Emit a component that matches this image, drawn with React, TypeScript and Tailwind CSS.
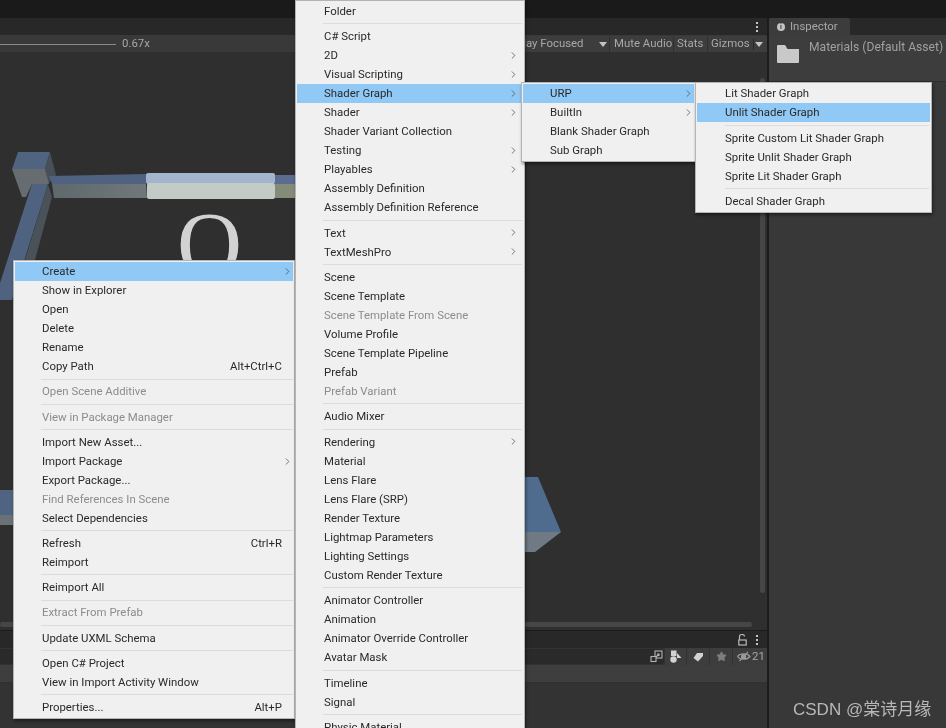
import { ChevronRight, Star } from "lucide-react";

type Row =
  | "-"
  | {
      label: string;
      arrow?: boolean;
      disabled?: boolean;
      active?: boolean;
      shortcut?: string;
    };

const t = (label: string): Row => ({ label });
const a = (label: string): Row => ({ label, arrow: true });
const d = (label: string): Row => ({ label, disabled: true });

const assetMenu: Row[] = [
  { label: "Create", arrow: true, active: true },
  t("Show in Explorer"),
  t("Open"),
  t("Delete"),
  t("Rename"),
  { label: "Copy Path", shortcut: "Alt+Ctrl+C" },
  "-",
  d("Open Scene Additive"),
  "-",
  d("View in Package Manager"),
  "-",
  t("Import New Asset..."),
  a("Import Package"),
  t("Export Package..."),
  d("Find References In Scene"),
  t("Select Dependencies"),
  "-",
  { label: "Refresh", shortcut: "Ctrl+R" },
  t("Reimport"),
  "-",
  t("Reimport All"),
  "-",
  d("Extract From Prefab"),
  "-",
  t("Update UXML Schema"),
  "-",
  t("Open C# Project"),
  t("View in Import Activity Window"),
  "-",
  { label: "Properties...", shortcut: "Alt+P" },
];

const createMenu: Row[] = [
  t("Folder"),
  "-",
  t("C# Script"),
  a("2D"),
  a("Visual Scripting"),
  { label: "Shader Graph", arrow: true, active: true },
  a("Shader"),
  t("Shader Variant Collection"),
  a("Testing"),
  a("Playables"),
  t("Assembly Definition"),
  t("Assembly Definition Reference"),
  "-",
  a("Text"),
  a("TextMeshPro"),
  "-",
  t("Scene"),
  t("Scene Template"),
  d("Scene Template From Scene"),
  t("Volume Profile"),
  t("Scene Template Pipeline"),
  t("Prefab"),
  d("Prefab Variant"),
  "-",
  t("Audio Mixer"),
  "-",
  a("Rendering"),
  t("Material"),
  t("Lens Flare"),
  t("Lens Flare (SRP)"),
  t("Render Texture"),
  t("Lightmap Parameters"),
  t("Lighting Settings"),
  t("Custom Render Texture"),
  "-",
  t("Animator Controller"),
  t("Animation"),
  t("Animator Override Controller"),
  t("Avatar Mask"),
  "-",
  t("Timeline"),
  t("Signal"),
  "-",
  t("Physic Material"),
];

const shaderGraphMenu: Row[] = [
  { label: "URP", arrow: true, active: true },
  a("BuiltIn"),
  t("Blank Shader Graph"),
  t("Sub Graph"),
];

const urpMenu: Row[] = [
  t("Lit Shader Graph"),
  { label: "Unlit Shader Graph", active: true },
  "-",
  t("Sprite Custom Lit Shader Graph"),
  t("Sprite Unlit Shader Graph"),
  t("Sprite Lit Shader Graph"),
  "-",
  t("Decal Shader Graph"),
];

function Menu({
  rows,
  className,
  sepHeight = "h-[6.4px]",
}: {
  rows: Row[];
  className: string;
  sepHeight?: string;
}) {
  return (
    <div
      className={`absolute border border-[#b4b4b4] bg-[#f0f0f0] p-px shadow-[1px_2px_3px_rgba(0,0,0,0.45)] ${className}`}
    >
      {rows.map((row, i) =>
        row === "-" ? (
          <div key={i} className={`flex items-center pl-[26px] pr-px ${sepHeight}`}>
            <div className="h-px w-full bg-[#dcdcdc]" />
          </div>
        ) : (
          <div
            key={i}
            className={`flex h-[19px] items-center justify-between pl-[27px] pr-[4px] ${
              row.active ? "bg-[#90c8f6]" : ""
            } ${row.disabled ? "text-[#8c8c8c]" : "text-[#2a2a2a]"}`}
          >
            <span className="pt-px">{row.label}</span>
            {row.shortcut && <span className="pr-[11px] pt-px">{row.shortcut}</span>}
            {row.arrow && (
              <ChevronRight size={11} strokeWidth={1.6} className="text-[#4a4a4a]" />
            )}
          </div>
        ),
      )}
    </div>
  );
}

function SceneDrawing() {
  return (
    <svg
      className="absolute left-0 top-[-52px]"
      width="767"
      height="630"
      viewBox="0 0 767 630"
    >
      <defs>
        <linearGradient id="barSide" x1="0" y1="0" x2="1" y2="0">
          <stop offset="0" stopColor="#5f686c" />
          <stop offset="1" stopColor="#70787b" />
        </linearGradient>
      </defs>
      <polygon points="12,169 18,152 50,152 45,169" fill="#50647f" />
      <polygon points="50,152 56,175 48,184 45,169" fill="#474f58" />
      <polygon points="12,169 45,169 49,184 32,184 26,197 22,197" fill="#666c70" />
      <polygon points="32,184 48,184 12,300 0,300 0,283" fill="#4f6280" />
      <polygon points="48,184 52,197 35,260 25,260" fill="#485258" />
      <polygon points="49,176 146,174 146,184 52,184" fill="#4f6280" />
      <polygon points="52,184 146,184 147,198 54,198" fill="url(#barSide)" />
      <rect x="146" y="173" width="129" height="11" rx="2" fill="#a3b5cc" />
      <rect x="147" y="183" width="128" height="16" rx="2" fill="#c3cbc6" />
      <rect x="275" y="175" width="20" height="9" fill="#5a6c8f" />
      <rect x="275" y="184" width="20" height="14" fill="#848c78" />
      <rect x="0" y="490" width="14" height="25" fill="#4f6480" />
      <rect x="0" y="515" width="14" height="10" fill="#6a7278" />
      <polygon points="524,477 538,477 561,532 524,532" fill="#4f6c8f" />
      <polygon points="524,532 561,532 535,552 524,552" fill="#6f7a85" />
    </svg>
  );
}

export default function App() {
  return (
    <div className="relative flex h-[728px] w-[946px] flex-col overflow-hidden bg-[#1a1a1a] font-['Roboto',sans-serif] text-[11.4px] leading-none blur-[0.4px]">
      <div className="h-[18px] shrink-0 bg-[#1a1a1a]" />

      <div className="flex min-h-0 flex-1">
        {/* scene and project panels */}
        <div className="flex w-[767px] shrink-0 flex-col">
          <div className="flex h-[17px] shrink-0 items-center justify-end bg-[#282828] pr-[9px]">
            <Dots />
          </div>
          <div className="flex h-[17px] shrink-0 items-center whitespace-nowrap bg-[#393939] pt-px text-[#a8a8a8]">
            <div className="h-px w-[116px] bg-[#8a8a8a]" />
            <span className="ml-[6px]">0.67x</span>
            <div className="ml-auto flex h-full items-center gap-px bg-[#303030]">
              <span className="flex h-full w-[100px] items-center bg-[#3d3d3d] pl-[7px]">
                Play Focused
                <Caret className="ml-auto mr-[2px]" />
              </span>
              <span className="flex h-full w-[63px] items-center bg-[#3d3d3d] pl-[4px]">Mute Audio</span>
              <span className="flex h-full w-[33px] items-center bg-[#3d3d3d] pl-[3px]">Stats</span>
              <span className="flex h-full w-[59px] items-center bg-[#3d3d3d] pl-[3px]">
                Gizmos
                <span className="ml-[3px] h-[11px] w-px bg-[#282828]" />
                <Caret className="ml-auto mr-[4px]" />
              </span>
            </div>
          </div>

          <div className="relative min-h-0 flex-1 overflow-hidden bg-[#2e2f2e]">
            <SceneDrawing />
            <span className="absolute left-[177px] top-[148px] font-['Liberation_Serif',serif] text-[90px] leading-none text-[#d2d2d2]">
              O
            </span>
            <div className="absolute bottom-[37px] right-[2px] top-[26px] w-[5px] rounded-full bg-[#464646]" />
            <div className="absolute bottom-[3px] left-0 h-[5px] w-[752px] rounded-full bg-[#464646]" />
          </div>

          <div className="flex h-[18px] shrink-0 items-center justify-end gap-[9px] border-t border-[#1c1c1c] bg-[#282828] pr-[9px]">
            <svg width="9" height="12" viewBox="0 0 9 12" fill="none" stroke="#b8b8b8" strokeWidth="1.2">
              <path d="M1.5 6V2.5a2.5 2 0 0 1 5 0" />
              <rect x="0.8" y="6" width="7.4" height="5" />
            </svg>
            <Dots />
          </div>
          <div className="flex h-[17px] shrink-0 items-center gap-px bg-[#323232] text-[#a8a8a8]">
            <div className="flex h-[15px] w-[664px] items-center justify-end rounded-r-[3px] bg-[#2a2a2a] pr-px">
              <svg width="13" height="13" viewBox="0 0 13 13" fill="none" stroke="#b4b4b4" strokeWidth="1.1">
                <rect x="5" y="1" width="7" height="7" />
                <rect x="1" y="6.5" width="5" height="5" fill="#2a2a2a" />
                <path d="M6 7l3-3M7 4h2v2" />
              </svg>
            </div>
            <IconCell width="w-[21px]">
              <svg width="13" height="13" viewBox="0 0 13 13" fill="#d2d2d2">
                <rect x="2" y="0.5" width="5.5" height="5.5" />
                <circle cx="4.5" cy="9.5" r="3.2" />
                <polygon points="8,3 12.5,8 8,8" />
              </svg>
            </IconCell>
            <IconCell width="w-[22px]">
              <svg width="11" height="10" viewBox="0 0 11 10" fill="#d2d2d2">
                <polygon points="4,1 10,1 10,4 5,9.5 0.5,6" />
              </svg>
            </IconCell>
            <IconCell width="w-[22px]">
              <Star size={11} fill="#7d7d7d" stroke="#7d7d7d" />
            </IconCell>
            <div className="flex h-full flex-1 items-center gap-px bg-[#3d3d3d] pl-[4px]">
              <svg width="14" height="11" viewBox="0 0 14 11" fill="none" stroke="#9a9a9a" strokeWidth="1.2">
                <path d="M0.5 5.5C3 2 10 2 13 5.5C10 9 3 9 0.5 5.5Z" />
                <circle cx="6.5" cy="5.5" r="2" fill="#9a9a9a" />
                <path d="M2.5 10L11 1" />
              </svg>
              <span>21</span>
            </div>
          </div>
          <div className="h-[18px] shrink-0 border-b border-[#303030] bg-[#3e3e3e]" />
          <div className="h-[45px] shrink-0 bg-[#333333]" />
        </div>

        <div className="w-[2px] shrink-0 bg-[#1c1c1c]" />

        {/* inspector */}
        <div className="flex min-w-0 flex-1 flex-col">
          <div className="flex h-[17px] shrink-0 bg-[#282828]">
            <div className="flex w-[81px] items-center gap-[5px] rounded-t-[2px] bg-[#3c3c3c] pl-[8px] pt-px text-[#a8a8a8]">
              <span className="flex h-[8px] w-[8px] items-center justify-center rounded-full bg-[#c4c4c4] text-[7px] font-bold text-[#3c3c3c]">
                i
              </span>
              <span>Inspector</span>
            </div>
          </div>
          <div className="flex h-[47px] shrink-0 border-b border-[#2c2c2c] bg-[#3d3d3d] pl-[8px] pt-[10px]">
            <svg width="22" height="18" viewBox="0 0 22 18" fill="#c9c9c9">
              <path d="M0 1a1 1 0 0 1 1-1h7l2.5 4H22v13a1 1 0 0 1-1 1H1a1 1 0 0 1-1-1Z" />
            </svg>
            <span className="ml-[10px] mt-[-8px] whitespace-nowrap text-[12.1px] leading-[20px] text-[#a0a0a0]">
              Materials (Default Asset)
            </span>
          </div>
          <div className="flex-1 bg-[#383838]" />
        </div>
      </div>

      <Menu
        rows={assetMenu}
        sepHeight="h-[6.2px]"
        className="left-[13px] top-[260px] w-[282px] [&>div]:pr-0"
      />
      <Menu rows={createMenu} className="left-[295px] top-[-0.5px] w-[230px]" />
      <Menu rows={shaderGraphMenu} className="left-[521px] top-[82px] w-[175px] [&>div]:pr-0" />
      <Menu rows={urpMenu} className="left-[695px] top-[82px] w-[237px] [&>div]:pl-[28px]" />

      <span className="absolute left-[793px] top-[700px] font-['Liberation_Sans','Noto_Sans_CJK_SC',sans-serif] text-[17px] leading-[20px] text-[#b8b8b8]">
        CSDN @棠诗月缘
      </span>
    </div>
  );
}

function Dots() {
  return (
    <span className="flex flex-col gap-[2px]">
      <i className="h-[2px] w-[2px] bg-[#c4c4c4]" />
      <i className="h-[2px] w-[2px] bg-[#c4c4c4]" />
      <i className="h-[2px] w-[2px] bg-[#c4c4c4]" />
    </span>
  );
}

function Caret({ className }: { className: string }) {
  return (
    <svg className={className} width="8" height="5" viewBox="0 0 8 5" fill="#c4c4c4">
      <polygon points="0,0 8,0 4,5" />
    </svg>
  );
}

function IconCell({ width, children }: { width: string; children: React.ReactNode }) {
  return (
    <div className={`flex h-full items-center justify-center bg-[#3d3d3d] ${width}`}>{children}</div>
  );
}
